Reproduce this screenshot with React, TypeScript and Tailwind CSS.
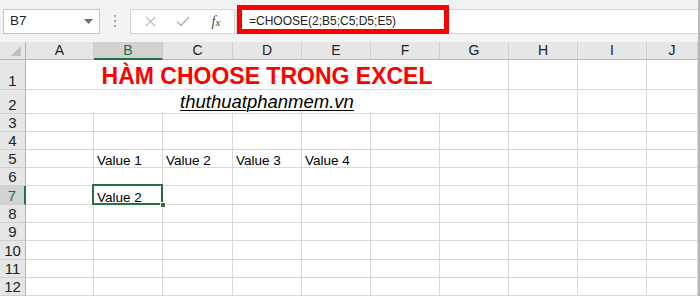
import React from "react";

const cols = ["A", "B", "C", "D", "E", "F", "G", "H", "I", "J"];
const colW = ["68px", "69px", "70px", "69px", "69px", "69px", "69px", "69px", "69px", "51px"];
const rowH = [30, 24, 18, 18, 18, 18, 19, 18, 18, 19, 18, 18];

const font = { fontFamily: '"Liberation Sans", Arial, sans-serif' };

function Cell({ r, c }: { r: number; c: number }) {
  let content: React.ReactNode = null;
  if (r === 5 && c >= 1 && c <= 4) content = `Value ${c}`;
  if (r === 7 && c === 1) content = "Value 2";
  const selected = r === 7 && c === 1;
  return (
    <div className={`relative flex items-end overflow-visible border-r border-b border-[#d9d9d9] bg-white pl-[3px] text-[13.5px] leading-none text-black ${selected ? "z-10" : ""}`}>
      {content && <span className="whitespace-nowrap">{content}</span>}
      {selected && (
        <>
          <div className="pointer-events-none absolute -left-[2px] -top-[2px] -right-[1px] -bottom-[1px] border-2 border-[#217346]" />
          <div className="absolute -right-[4px] -bottom-[4px] h-[6px] w-[6px] border border-white bg-[#217346]" />
        </>
      )}
    </div>
  );
}

export default function App() {
  return (
    <div className="relative h-[296px] w-[700px] overflow-hidden bg-[#f3f3f3]" style={font}>
      {/* Toolbar */}
      <div className="flex h-[42px] items-center border-r-2 border-[#b8b8b8] bg-[#f3f3f3] pl-[3px]">
        <div className="flex h-[25px] w-[97px] items-center justify-between border border-[#c6c6c6] bg-white pl-[6px] pr-[6px]">
          <span className="text-[13.5px] text-[#222]">B7</span>
          <svg width="9" height="5" viewBox="0 0 9 5"><path d="M0 0 L9 0 L4.5 5 Z" fill="#707070" /></svg>
        </div>
        <div className="flex w-[30px] flex-col items-center gap-[3px]">
          <div className="h-[2px] w-[2px] bg-[#a8a8a8]" />
          <div className="h-[2px] w-[2px] bg-[#a8a8a8]" />
          <div className="h-[2px] w-[2px] bg-[#a8a8a8]" />
        </div>
        <div className="flex h-[25px] w-[105px] items-center border border-[#d4d4d4] bg-white">
          <div className="flex w-[36px] justify-center pl-[2px]">
            <svg width="11" height="11" viewBox="0 0 11 11"><path d="M1 1 L10 10 M10 1 L1 10" stroke="#bdbdbd" strokeWidth="1.3" /></svg>
          </div>
          <div className="flex w-[32px] justify-center">
            <svg width="14" height="11" viewBox="0 0 14 11"><path d="M1 5.5 L5 9.5 L13 1" stroke="#bdbdbd" strokeWidth="1.6" fill="none" /></svg>
          </div>
          <div className="flex w-[34px] justify-center">
            <span className="text-[14px] italic text-[#444]" style={{ fontFamily: '"Liberation Serif", serif' }}>f<span className="text-[11px]">x</span></span>
          </div>
        </div>
        <div className="ml-[1px] flex h-[25px] flex-1 items-center border border-r-0 border-[#d4d4d4] bg-white pl-[12px]">
          <span className="text-[12px] text-[#222]">=CHOOSE(2;B5;C5;D5;E5)</span>
        </div>
      </div>
      {/* Red annotation */}
      <div className="pointer-events-none absolute left-[237px] top-[5px] h-[29px] w-[212px] border-[5px] border-[#ff0000]" />

      {/* Sheet */}
      <div
        className="grid border-r-2 border-b border-[#b8b8b8]"
        style={{
          gridTemplateColumns: `26px ${colW.join(" ")}`,
          gridTemplateRows: `18px ${rowH.map((h) => h + "px").join(" ")}`,
        }}
      >
        {/* corner */}
        <div className="relative border-r border-b border-[#b5b5b5] bg-[#e6e6e6]">
          <svg className="absolute right-[4px] bottom-[3px]" width="10" height="10" viewBox="0 0 10 10"><path d="M10 0 L10 10 L0 10 Z" fill="#bfbfbf" /></svg>
        </div>
        {cols.map((c) =>
          c === "B" ? (
            <div key={c} className="flex items-center justify-center border-r border-b-2 border-r-[#c6c6c6] border-b-[#217346] bg-[#d2d2d2] pt-[1px] text-[14px] text-[#217346]">
              {c}
            </div>
          ) : (
            <div key={c} className="flex items-center justify-center border-r border-b border-r-[#d0d0d0] border-b-[#b5b5b5] bg-[#e6e6e6] text-[14px] text-[#222]">
              {c}
            </div>
          )
        )}
        {rowH.map((_, i) => {
          const r = i + 1;
          return (
            <React.Fragment key={r}>
              {r === 7 ? (
                <div className="flex items-end justify-center border-r-2 border-b border-r-[#217346] border-b-[#d0d0d0] bg-[#d2d2d2] text-[15px] leading-[17px] text-[#217346]">
                  {r}
                </div>
              ) : (
                <div className="flex items-end justify-center border-r border-b border-r-[#b5b5b5] border-b-[#d0d0d0] bg-[#e6e6e6] text-[15px] leading-[17px] text-[#222]">
                  {r}
                </div>
              )}
              {r === 1 ? (
                <>
                  <div className="col-span-7 flex items-end justify-center border-r border-b border-[#d9d9d9] bg-white pb-[1px]">
                    <span className="whitespace-nowrap text-[23px] font-bold leading-none text-[#ff0000]">HÀM CHOOSE TRONG EXCEL</span>
                  </div>
                  {[7, 8, 9].map((c) => <Cell key={c} r={r} c={c} />)}
                </>
              ) : r === 2 ? (
                <>
                  <div className="col-span-7 flex items-end justify-center border-r border-b border-[#d9d9d9] bg-white pb-[2px]">
                    <span className="whitespace-nowrap text-[18.5px] italic leading-none text-black underline decoration-1 underline-offset-2">thuthuatphanmem.vn</span>
                  </div>
                  {[7, 8, 9].map((c) => <Cell key={c} r={r} c={c} />)}
                </>
              ) : (
                cols.map((_, c) => <Cell key={c} r={r} c={c} />)
              )}
            </React.Fragment>
          );
        })}
      </div>
    </div>
  );
}
